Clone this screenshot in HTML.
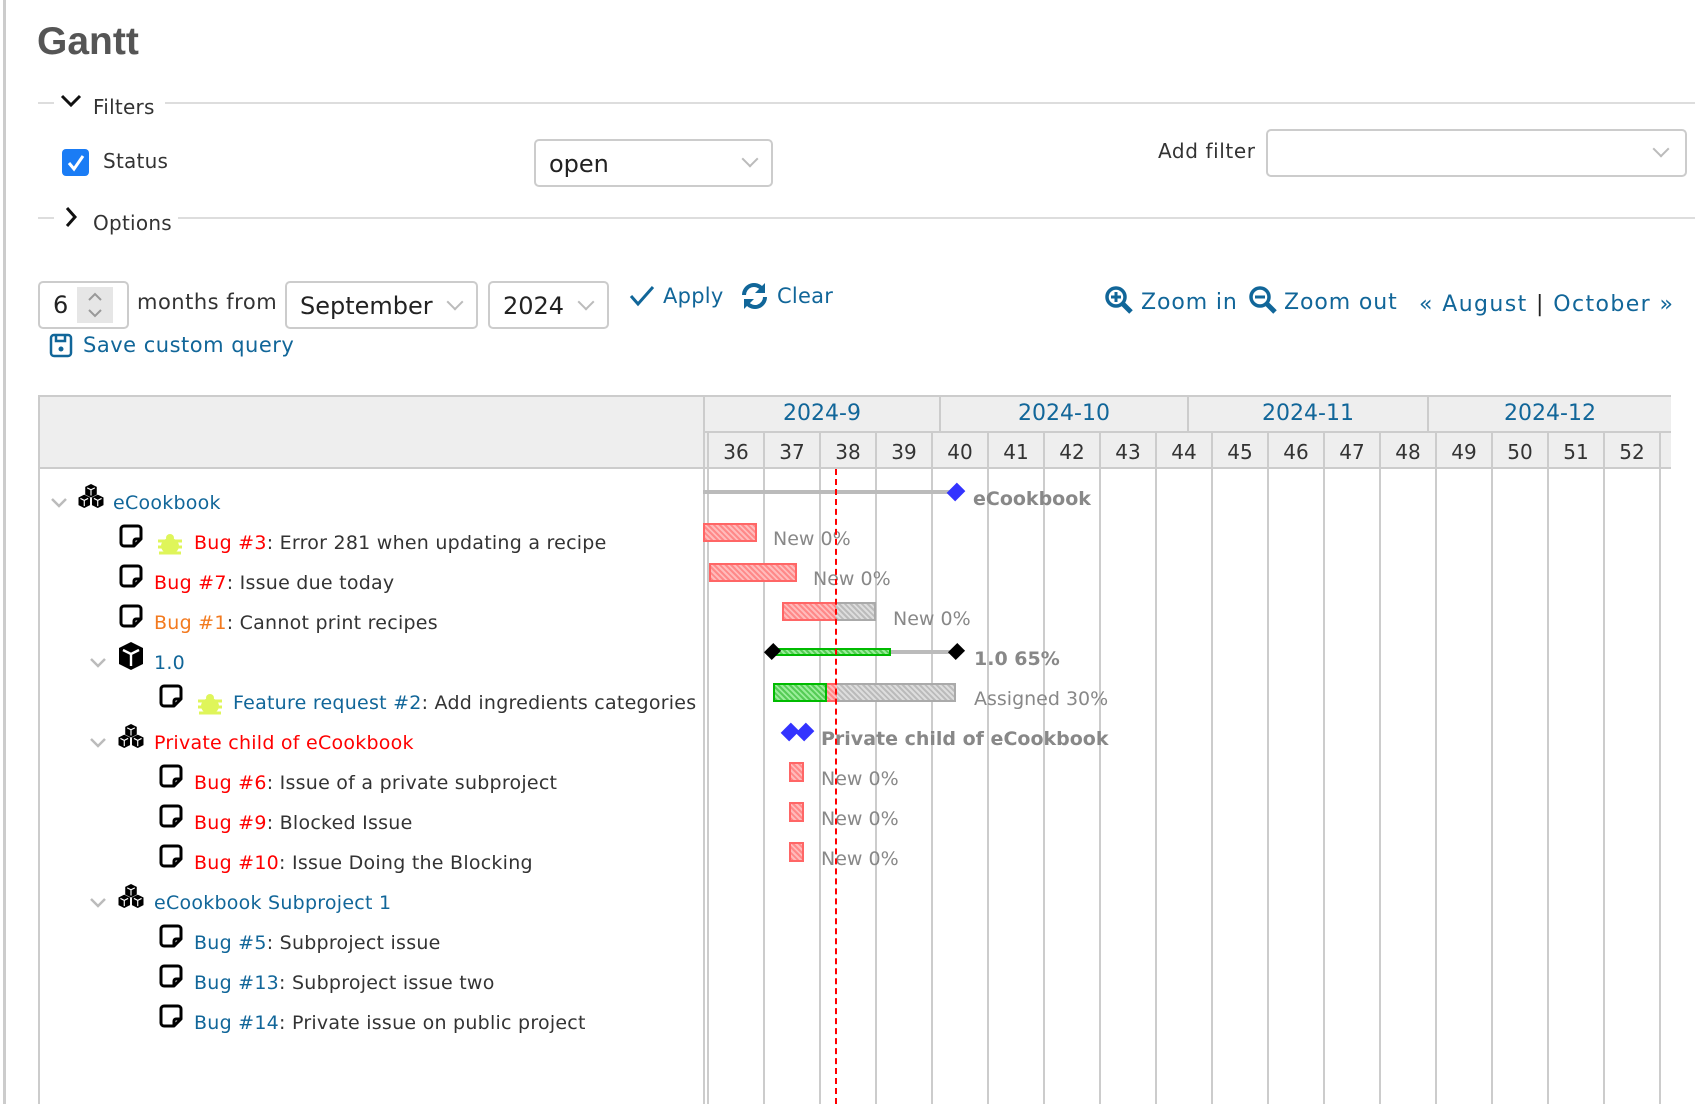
<!DOCTYPE html>
<html><head><meta charset="utf-8">
<style>
*{box-sizing:border-box;margin:0;padding:0}
body{width:1695px;height:1104px;overflow:hidden;background:#fff;font-family:"DejaVu Sans","Liberation Sans",sans-serif;color:#333;position:relative}
.a{position:absolute;white-space:nowrap}
.lk{color:#169}
.t{font-size:19px;line-height:24px;letter-spacing:0.25px}
.sel{position:absolute;border:2px solid #ccc;border-radius:5px;background:#fff}
.chev{position:absolute;width:12px;height:12px;border-right:2px solid #bbb;border-bottom:2px solid #bbb;transform:rotate(45deg)}
.vl{position:absolute;top:432px;width:2px;height:672px;background:#ccc}
.red{background:repeating-linear-gradient(45deg,#f88 0 2px,#fbb 2px 4px);border:2px solid #f66}
.gry{background:repeating-linear-gradient(45deg,#bbb 0 2px,#ddd 2px 4px);border:2px solid #aaa}
.grn{background:repeating-linear-gradient(45deg,#5c5 0 2px,#9e9 2px 4px);border:2px solid #0b0}
.lbl{position:absolute;font-size:19px;line-height:24px;color:#888;white-space:nowrap}
</style></head><body>
<div class="a" style="left:3px;top:0;width:3px;height:1104px;background:#ccc"></div>
<div class="a" style="left:37px;top:20px;font-size:39px;font-weight:bold;color:#555;font-family:'Liberation Sans',sans-serif">Gantt</div>

<div class="a" style="left:38px;top:102px;width:16px;height:2px;background:#ddd"></div>
<div class="a" style="left:165px;top:102px;width:1530px;height:2px;background:#ddd"></div>
<svg class="a" style="left:60px;top:94px" width="22" height="14"><path d="M2 2 L11 11 L20 2" fill="none" stroke="#111" stroke-width="3"/></svg>
<div class="a t" style="left:93px;top:95px;font-size:20px">Filters</div>
<div class="a" style="left:62px;top:149px;width:27px;height:27px;background:#1a7cf5;border-radius:4px"></div>
<svg class="a" style="left:62px;top:149px" width="27" height="27"><path d="M7 14 L12 20 L21 7" fill="none" stroke="#fff" stroke-width="3"/></svg>
<div class="a t" style="left:103px;top:149px;font-size:20px">Status</div>
<div class="sel" style="left:534px;top:139px;width:239px;height:48px"></div>
<div class="a" style="left:549px;top:150px;font-size:24px;line-height:28px;color:#222">open</div>
<div class="chev" style="left:744px;top:153px"></div>
<div class="a t" style="left:1158px;top:139px;font-size:20px;letter-spacing:0.6px">Add filter</div>
<div class="sel" style="left:1266px;top:129px;width:421px;height:48px"></div>
<div class="chev" style="left:1655px;top:143px"></div>

<div class="a" style="left:38px;top:217px;width:16px;height:2px;background:#ddd"></div>
<div class="a" style="left:178px;top:217px;width:1517px;height:2px;background:#ddd"></div>
<svg class="a" style="left:64px;top:206px" width="14" height="22"><path d="M3 2 L11 11 L3 20" fill="none" stroke="#111" stroke-width="3"/></svg>
<div class="a t" style="left:93px;top:211px;font-size:20px">Options</div>

<div class="sel" style="left:38px;top:281px;width:91px;height:48px"></div>
<div class="a" style="left:53px;top:291px;font-size:24px;line-height:28px;color:#222">6</div>
<div class="a" style="left:77px;top:287px;width:36px;height:36px;background:#e6e6e6"></div>
<svg class="a" style="left:85px;top:290px" width="20" height="30"><path d="M4 10 L10 4 L16 10 M4 20 L10 26 L16 20" fill="none" stroke="#999" stroke-width="2"/></svg>
<div class="a t" style="left:137px;top:290px;font-size:21px;letter-spacing:0.5px">months from</div>
<div class="sel" style="left:285px;top:281px;width:193px;height:48px"></div>
<div class="a" style="left:300px;top:292px;font-size:24px;line-height:28px;color:#222">September</div>
<div class="chev" style="left:449px;top:296px"></div>
<div class="sel" style="left:488px;top:281px;width:121px;height:48px"></div>
<div class="a" style="left:503px;top:292px;font-size:24px;line-height:28px;color:#222">2024</div>
<div class="chev" style="left:580px;top:296px"></div>
<svg class="a" style="left:629px;top:285px" width="26" height="22"><path d="M2 11 L9 19 L24 2" fill="none" stroke="#169" stroke-width="3"/></svg>
<div class="a t lk" style="left:663px;top:284px;font-size:21px">Apply</div>
<svg class="a" style="left:740px;top:281px" width="29" height="30" viewBox="0 0 29 30"><path d="M4 14 A10 10 0 0 1 22 8" fill="none" stroke="#169" stroke-width="4"/><path d="M25 2 L25 12 L15 12 Z" fill="#169"/><path d="M25 16 A10 10 0 0 1 7 22" fill="none" stroke="#169" stroke-width="4"/><path d="M4 28 L4 18 L14 18 Z" fill="#169"/></svg>
<div class="a t lk" style="left:777px;top:284px;font-size:21px">Clear</div>
<svg class="a" style="left:1104px;top:285px" width="30" height="30"><circle cx="12" cy="12" r="9" fill="none" stroke="#169" stroke-width="3.5"/><path d="M18 18 L27 27" stroke="#169" stroke-width="5"/><path d="M12 7 V17 M7 12 H17" stroke="#169" stroke-width="3"/></svg>
<div class="a lk" style="left:1141px;top:289px;font-size:22px;line-height:28px;letter-spacing:0.9px">Zoom in</div>
<svg class="a" style="left:1248px;top:285px" width="30" height="30"><circle cx="12" cy="12" r="9" fill="none" stroke="#169" stroke-width="3.5"/><path d="M18 18 L27 27" stroke="#169" stroke-width="5"/><path d="M7 12 H17" stroke="#169" stroke-width="3"/></svg>
<div class="a lk" style="left:1284px;top:289px;font-size:22px;line-height:28px;letter-spacing:0.9px">Zoom out</div>
<div class="a lk" style="left:1419px;top:291px;font-size:22px;line-height:28px;letter-spacing:1.4px">« August <span style="color:#222">|</span> October »</div>
<svg class="a" style="left:49px;top:333px" width="24" height="25"><rect x="2" y="2" width="20" height="21" rx="3" fill="none" stroke="#169" stroke-width="2.5"/><path d="M7 2 V8 H16 V2" fill="none" stroke="#169" stroke-width="2.5"/><circle cx="12" cy="16" r="2.5" fill="#169"/></svg>
<div class="a t lk" style="left:83px;top:333px;font-size:21px;letter-spacing:0.5px">Save custom query</div>

<div class="a" style="left:38px;top:395px;width:1633px;height:709px;border-left:2px solid #ccc;border-top:2px solid #ccc"></div>
<div class="a" style="left:40px;top:397px;width:1631px;height:72px;background:#eee"></div>
<div class="a" style="left:38px;top:467px;width:1633px;height:2px;background:#ccc"></div>
<div class="a" style="left:703px;top:395px;width:2px;height:709px;background:#ccc"></div>
<div class="a" style="left:705px;top:431px;width:966px;height:2px;background:#ccc"></div>
<div class="a" style="left:939px;top:397px;width:2px;height:35px;background:#ccc"></div>
<div class="a" style="left:1187px;top:397px;width:2px;height:35px;background:#ccc"></div>
<div class="a" style="left:1427px;top:397px;width:2px;height:35px;background:#ccc"></div>
<div class="a lk" style="left:705px;top:400px;width:234px;text-align:center;font-size:22px;line-height:28px">2024-9</div>
<div class="a lk" style="left:941px;top:400px;width:246px;text-align:center;font-size:22px;line-height:28px">2024-10</div>
<div class="a lk" style="left:1189px;top:400px;width:238px;text-align:center;font-size:22px;line-height:28px">2024-11</div>
<div class="a lk" style="left:1429px;top:400px;width:242px;text-align:center;font-size:22px;line-height:28px">2024-12</div>
<div class="vl" style="left:707px"></div><div class="vl" style="left:763px"></div><div class="vl" style="left:819px"></div><div class="vl" style="left:875px"></div><div class="vl" style="left:931px"></div><div class="vl" style="left:987px"></div><div class="vl" style="left:1043px"></div><div class="vl" style="left:1099px"></div><div class="vl" style="left:1155px"></div><div class="vl" style="left:1211px"></div><div class="vl" style="left:1267px"></div><div class="vl" style="left:1323px"></div><div class="vl" style="left:1379px"></div><div class="vl" style="left:1435px"></div><div class="vl" style="left:1491px"></div><div class="vl" style="left:1547px"></div><div class="vl" style="left:1603px"></div><div class="vl" style="left:1659px"></div>
<div class="a" style="left:708px;top:439px;font-size:20px;line-height:26px;color:#333">
<span style="position:absolute;left:0;width:56px;text-align:center">36</span><span style="position:absolute;left:56px;width:56px;text-align:center">37</span><span style="position:absolute;left:112px;width:56px;text-align:center">38</span><span style="position:absolute;left:168px;width:56px;text-align:center">39</span><span style="position:absolute;left:224px;width:56px;text-align:center">40</span><span style="position:absolute;left:280px;width:56px;text-align:center">41</span><span style="position:absolute;left:336px;width:56px;text-align:center">42</span><span style="position:absolute;left:392px;width:56px;text-align:center">43</span><span style="position:absolute;left:448px;width:56px;text-align:center">44</span><span style="position:absolute;left:504px;width:56px;text-align:center">45</span><span style="position:absolute;left:560px;width:56px;text-align:center">46</span><span style="position:absolute;left:616px;width:56px;text-align:center">47</span><span style="position:absolute;left:672px;width:56px;text-align:center">48</span><span style="position:absolute;left:728px;width:56px;text-align:center">49</span><span style="position:absolute;left:784px;width:56px;text-align:center">50</span><span style="position:absolute;left:840px;width:56px;text-align:center">51</span><span style="position:absolute;left:896px;width:56px;text-align:center">52</span></div>

<div class="a" style="left:703px;top:490px;width:253px;height:4px;background:#bbb"></div>
<div class="a" style="left:950px;top:486px;width:12px;height:12px;background:#33f;transform:rotate(45deg) scaleY(1.2)"></div>
<div class="lbl" style="left:973px;top:487px;font-weight:bold">eCookbook</div>

<div class="a red" style="left:703px;top:523px;width:54px;height:19px"></div>
<div class="lbl" style="left:773px;top:527px">New 0%</div>
<div class="a red" style="left:709px;top:563px;width:88px;height:19px"></div>
<div class="lbl" style="left:813px;top:567px">New 0%</div>
<div class="a red" style="left:782px;top:602px;width:56px;height:19px;border-right:none"></div>
<div class="a gry" style="left:836px;top:602px;width:40px;height:19px;border-left:none"></div>
<div class="lbl" style="left:893px;top:607px">New 0%</div>

<div class="a" style="left:773px;top:650px;width:183px;height:4px;background:#bbb"></div>
<div class="a grn" style="left:773px;top:648px;width:118px;height:8px"></div>
<div class="a" style="left:767px;top:646px;width:11px;height:11px;background:#000;transform:rotate(45deg) scaleY(1.2)"></div>
<div class="a" style="left:951px;top:646px;width:11px;height:11px;background:#000;transform:rotate(45deg) scaleY(1.2)"></div>
<div class="lbl" style="left:974px;top:647px;font-weight:bold">1.0 65%</div>

<div class="a gry" style="left:773px;top:683px;width:183px;height:19px"></div>
<div class="a red" style="left:823px;top:683px;width:14px;height:19px;border-left:none;border-right:none"></div>
<div class="a grn" style="left:773px;top:683px;width:54px;height:19px"></div>
<div class="lbl" style="left:974px;top:687px">Assigned 30%</div>

<div class="a" style="left:784px;top:726px;width:12px;height:12px;background:#33f;transform:rotate(45deg) scaleY(1.2)"></div>
<div class="a" style="left:799px;top:726px;width:12px;height:12px;background:#33f;transform:rotate(45deg) scaleY(1.2)"></div>
<div class="lbl" style="left:821px;top:727px;font-weight:bold">Private child of eCookbook</div>

<div class="a red" style="left:789px;top:762px;width:15px;height:20px"></div>
<div class="lbl" style="left:821px;top:767px">New 0%</div>
<div class="a red" style="left:789px;top:802px;width:15px;height:20px"></div>
<div class="lbl" style="left:821px;top:807px">New 0%</div>
<div class="a red" style="left:789px;top:842px;width:15px;height:20px"></div>
<div class="lbl" style="left:821px;top:847px">New 0%</div>

<div class="a" style="left:835px;top:469px;width:0;height:635px;border-left:2px dashed #f00"></div>

<svg width="0" height="0" style="position:absolute">
<defs>
<symbol id="iss" viewBox="0 0 24 24"><path d="M5 2 H19 A3 3 0 0 1 22 5 V15 L15 22 H5 A3 3 0 0 1 2 19 V5 A3 3 0 0 1 5 2 Z M22 15 H17 A2 2 0 0 0 15 17 V22" fill="none" stroke="#000" stroke-width="3" stroke-linejoin="round"/></symbol>
<symbol id="cube" viewBox="0 0 14 14"><path d="M7 0 L13 3 V11 L7 14 L1 11 V3 Z" fill="#000"/><path d="M3 4 L7 6 L11 4" fill="none" stroke="#fff" stroke-width="1.2"/><path d="M7 6 V12" stroke="#fff" stroke-width="1.2"/></symbol>
<symbol id="proj" viewBox="0 0 28 26"><use href="#cube" x="7" y="0" width="14" height="14"/><use href="#cube" x="0" y="11" width="14" height="14"/><use href="#cube" x="14" y="11" width="14" height="14"/></symbol>
<symbol id="bug" viewBox="0 0 28 22"><ellipse cx="14" cy="13" rx="9" ry="8" fill="#dff55a"/><circle cx="14" cy="5" r="4" fill="#dff55a"/><path d="M2 8 H26 M2 14 H26 M3 20 H25" stroke="#dff55a" stroke-width="3"/></symbol>
<symbol id="chv" viewBox="0 0 18 12"><path d="M2 2 L9 9 L16 2" fill="none" stroke="#bbb" stroke-width="2.5"/></symbol>
</defs></svg>

<svg class="a" style="left:50px;top:497px" width="18" height="12"><use href="#chv"/></svg>
<svg class="a" style="left:77px;top:484px" width="28" height="25"><use href="#proj"/></svg>
<div class="a t lk" style="left:113px;top:491px">eCookbook</div>

<svg class="a" style="left:119px;top:524px" width="24" height="24"><use href="#iss"/></svg>
<svg class="a" style="left:156px;top:533px" width="28" height="22"><use href="#bug"/></svg>
<div class="a t" style="left:194px;top:531px"><span style="color:#f00">Bug #3</span>: Error 281 when updating a recipe</div>

<svg class="a" style="left:119px;top:564px" width="24" height="24"><use href="#iss"/></svg>
<div class="a t" style="left:154px;top:571px"><span style="color:#f00">Bug #7</span>: Issue due today</div>

<svg class="a" style="left:119px;top:604px" width="24" height="24"><use href="#iss"/></svg>
<div class="a t" style="left:154px;top:611px"><span style="color:#f37a1f">Bug #1</span>: Cannot print recipes</div>

<svg class="a" style="left:89px;top:657px" width="18" height="12"><use href="#chv"/></svg>
<svg class="a" style="left:117px;top:642px" width="28" height="28" viewBox="0 0 14 14"><use href="#cube"/></svg>
<div class="a t lk" style="left:154px;top:651px">1.0</div>

<svg class="a" style="left:159px;top:684px" width="24" height="24"><use href="#iss"/></svg>
<svg class="a" style="left:196px;top:693px" width="28" height="22"><use href="#bug"/></svg>
<div class="a t" style="left:233px;top:691px"><span class="lk">Feature request #2</span>: Add ingredients categories</div>

<svg class="a" style="left:89px;top:737px" width="18" height="12"><use href="#chv"/></svg>
<svg class="a" style="left:117px;top:724px" width="28" height="25"><use href="#proj"/></svg>
<div class="a t" style="left:154px;top:731px;color:#f00">Private child of eCookbook</div>

<svg class="a" style="left:159px;top:764px" width="24" height="24"><use href="#iss"/></svg>
<div class="a t" style="left:194px;top:771px"><span style="color:#f00">Bug #6</span>: Issue of a private subproject</div>
<svg class="a" style="left:159px;top:804px" width="24" height="24"><use href="#iss"/></svg>
<div class="a t" style="left:194px;top:811px"><span style="color:#f00">Bug #9</span>: Blocked Issue</div>
<svg class="a" style="left:159px;top:844px" width="24" height="24"><use href="#iss"/></svg>
<div class="a t" style="left:194px;top:851px"><span style="color:#f00">Bug #10</span>: Issue Doing the Blocking</div>

<svg class="a" style="left:89px;top:897px" width="18" height="12"><use href="#chv"/></svg>
<svg class="a" style="left:117px;top:884px" width="28" height="25"><use href="#proj"/></svg>
<div class="a t lk" style="left:154px;top:891px">eCookbook Subproject 1</div>

<svg class="a" style="left:159px;top:924px" width="24" height="24"><use href="#iss"/></svg>
<div class="a t" style="left:194px;top:931px"><span class="lk">Bug #5</span>: Subproject issue</div>
<svg class="a" style="left:159px;top:964px" width="24" height="24"><use href="#iss"/></svg>
<div class="a t" style="left:194px;top:971px"><span class="lk">Bug #13</span>: Subproject issue two</div>
<svg class="a" style="left:159px;top:1004px" width="24" height="24"><use href="#iss"/></svg>
<div class="a t" style="left:194px;top:1011px"><span class="lk">Bug #14</span>: Private issue on public project</div>
</body></html>
